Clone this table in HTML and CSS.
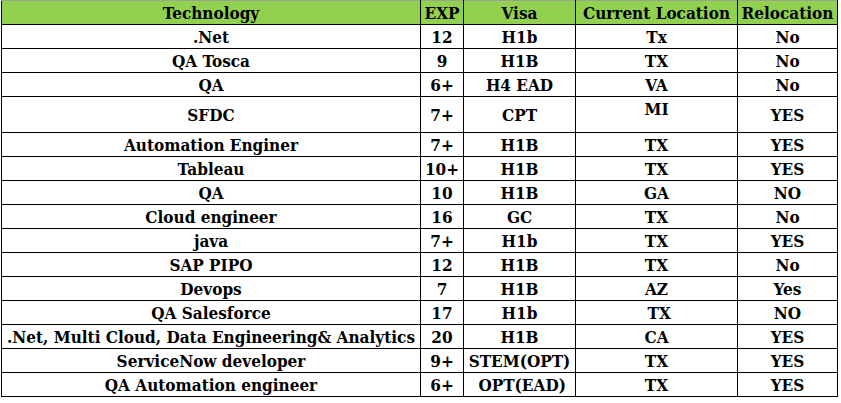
FILE: index.html
```html
<!DOCTYPE html>
<html>
<head>
<meta charset="utf-8">
<link rel="stylesheet" href="styles.css">
</head>
<body>
<table class="grid">
  <colgroup>
    <col class="c-tech"><col class="c-exp"><col class="c-visa"><col class="c-loc"><col class="c-rel">
  </colgroup>
  <thead>
    <tr class="head"><th>Technology</th><th>EXP</th><th>Visa</th><th>Current Location</th><th>Relocation</th></tr>
  </thead>
  <tbody>
    <tr><td>.Net</td><td>12</td><td>H1b</td><td>Tx</td><td>No</td></tr>
    <tr><td>QA Tosca</td><td>9</td><td>H1B</td><td>TX</td><td>No</td></tr>
    <tr><td>QA</td><td>6+</td><td>H4 EAD</td><td>VA</td><td>No</td></tr>
    <tr class="tall"><td>SFDC</td><td>7+</td><td>CPT</td><td class="top">MI</td><td>YES</td></tr>
    <tr><td>Automation Enginer</td><td>7+</td><td>H1B</td><td>TX</td><td>YES</td></tr>
    <tr><td>Tableau</td><td>10+</td><td>H1B</td><td>TX</td><td>YES</td></tr>
    <tr><td>QA</td><td>10</td><td>H1B</td><td>GA</td><td>NO</td></tr>
    <tr><td>Cloud engineer</td><td>16</td><td>GC</td><td>TX</td><td>No</td></tr>
    <tr><td>java</td><td>7+</td><td>H1b</td><td>TX</td><td>YES</td></tr>
    <tr><td>SAP PIPO</td><td>12</td><td>H1B</td><td>TX</td><td>No</td></tr>
    <tr><td>Devops</td><td>7</td><td>H1B</td><td>AZ</td><td>Yes</td></tr>
    <tr><td>QA Salesforce</td><td>17</td><td>H1b</td><td>&nbsp;TX</td><td>NO</td></tr>
    <tr><td>.Net, Multi Cloud, Data Engineering&amp; Analytics</td><td>20</td><td>H1B</td><td>CA</td><td>YES</td></tr>
    <tr><td>ServiceNow developer</td><td>9+</td><td>STEM(OPT)</td><td>TX</td><td>YES</td></tr>
    <tr><td>QA Automation engineer</td><td>6+</td><td>&nbsp;OPT(EAD)</td><td>TX</td><td>YES</td></tr>
  </tbody>
</table>
</body>
</html>
```

FILE: styles.css
```css
html, body {
  margin: 0;
  padding: 0;
  background: #ffffff;
}
body {
  padding-left: 1px;
  color: #000;
}
.grid {
  border-collapse: collapse;
  table-layout: fixed;
  width: 836px;
  font-family: "DejaVu Serif", serif;
  font-stretch: condensed;
}
.c-tech { width: 419px; }
.c-exp { width: 43px; }
.c-visa { width: 112px; }
.c-loc { width: 162px; }
.c-rel { width: 100px; }
.grid th, .grid td {
  border: 1px solid #000;
  padding: 0;
  height: 23px;
  font-family: "DejaVu Serif", serif;
  font-stretch: condensed;
  font-weight: bold;
  font-size: 17px;
  line-height: 22px;
  text-align: center;
  vertical-align: bottom;
  white-space: nowrap;
  overflow: hidden;
}
.head th {
  background: #92d050;
  border-top-color: #9aa58f;
}
.tall td {
  height: 34px;
  vertical-align: middle;
}
.tall td.top {
  vertical-align: top;
  padding-top: 1px;
}
```
